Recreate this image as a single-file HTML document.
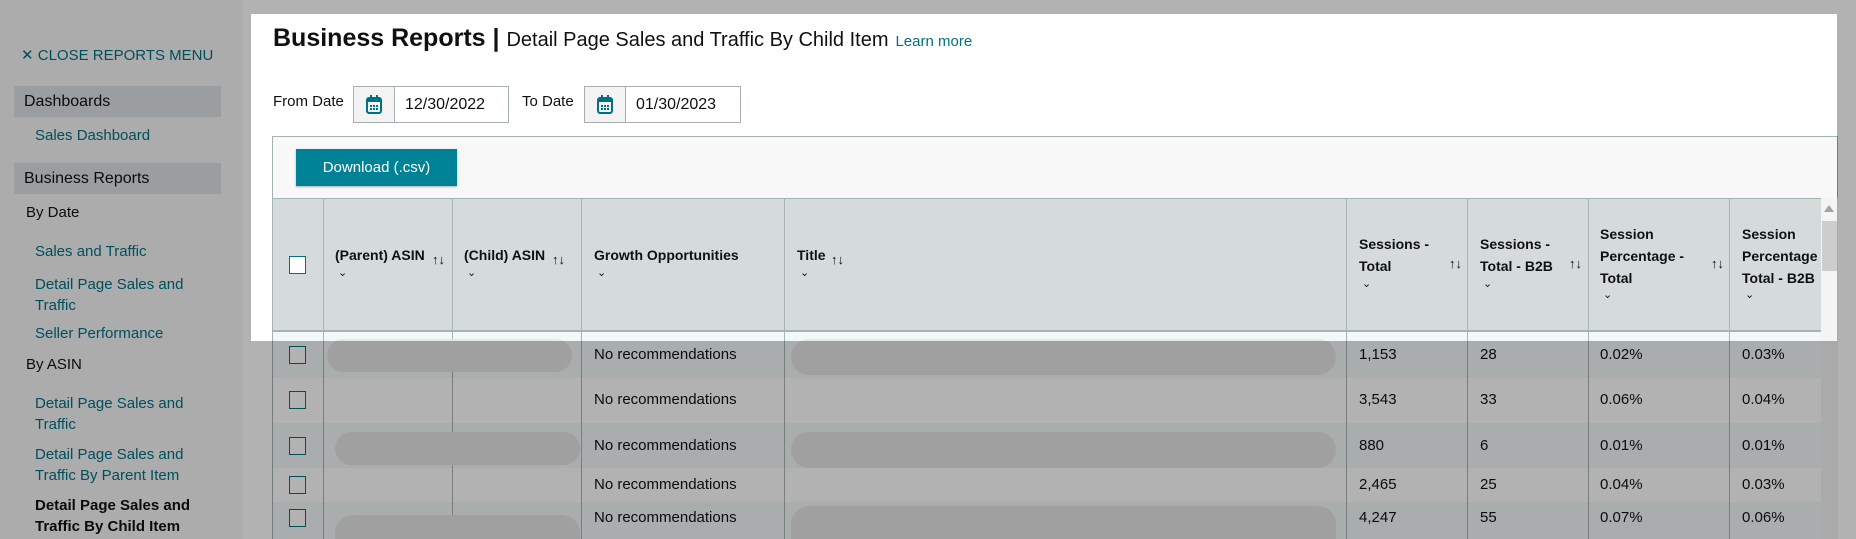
<!DOCTYPE html>
<html><head><meta charset="utf-8"><style>
*{box-sizing:border-box;margin:0;padding:0}
html{width:1856px;height:539px;overflow:hidden}
body{width:1856px;height:539px;overflow:hidden;background:#fff;font-family:"Liberation Sans",sans-serif;color:#0f1111;position:relative}
.a{position:absolute;white-space:nowrap}
.side{left:0;top:0;width:243px;height:539px;background:#f7f7f7}
.lk{color:#007185;font-size:15px}
.sec{background:#dfe3e5;font-size:16px;color:#0f1111;padding-left:10px;line-height:31px;width:207px;left:14px}
.hd{font-size:14px;font-weight:bold;color:#0f1111;line-height:22px}
.car{font-size:11px;color:#0f1111}
.sort{font-size:13px;font-weight:bold}
.cb{width:17px;height:18px;border:1.5px solid #007185;background:#fff}
.td{font-size:15px;color:#0f1111}
.pill{background:#e6e6e6;border-radius:18px}
.ov{position:absolute;background:rgba(0,0,0,0.3)}
.vl{position:absolute;width:1px;background:#a9b5b5}
</style></head><body>
<div class="a side"></div>
<div class="a lk" style="left:21px;top:46px">✕ CLOSE REPORTS MENU</div>
<div class="a sec" style="top:86px">Dashboards</div>
<div class="a lk" style="left:35px;top:127px">Sales Dashboard</div>
<div class="a sec" style="top:163px">Business Reports</div>
<div class="a" style="left:26px;top:204px;font-size:15px">By Date</div>
<div class="a lk" style="left:35px;top:243px">Sales and Traffic</div>
<div class="a lk" style="left:35px;top:274px;line-height:21px">Detail Page Sales and<br>Traffic</div>
<div class="a lk" style="left:35px;top:325px">Seller Performance</div>
<div class="a" style="left:26px;top:356px;font-size:15px">By ASIN</div>
<div class="a lk" style="left:35px;top:393px;line-height:21px">Detail Page Sales and<br>Traffic</div>
<div class="a lk" style="left:35px;top:444px;line-height:21px">Detail Page Sales and<br>Traffic By Parent Item</div>
<div class="a" style="left:35px;top:495px;line-height:21px;font-size:15px;font-weight:bold">Detail Page Sales and<br>Traffic By Child Item</div>

<div class="a" style="left:273px;top:24px;font-size:25px;font-weight:bold;color:#0f1111">Business Reports <span style="font-weight:bold">|</span> <span style="font-size:20px;font-weight:normal">Detail Page Sales and Traffic By Child Item</span> <span style="font-size:15px;font-weight:normal;color:#007185">Learn more</span></div>

<div class="a" style="left:273px;top:93px;font-size:15px">From Date</div>
<div class="a" style="left:353px;top:86px;width:156px;height:37px;border:1px solid #a6b0b0;background:#fff"></div>
<div class="a" style="left:353px;top:86px;width:42px;height:37px;border:1px solid #a6b0b0;background:#f3f3f3"></div>
<svg class="a" style="left:366px;top:95px" width="16" height="19" viewBox="0 0 16 19"><rect x="1" y="3" width="14" height="15" rx="2" fill="none" stroke="#007185" stroke-width="2"/><rect x="1" y="3" width="14" height="4" fill="#007185"/><rect x="4" y="0" width="2" height="4" fill="#007185"/><rect x="10" y="0" width="2" height="4" fill="#007185"/><g fill="#007185"><rect x="4" y="10" width="2" height="2"/><rect x="7" y="10" width="2" height="2"/><rect x="10" y="10" width="2" height="2"/><rect x="4" y="13" width="2" height="2"/><rect x="7" y="13" width="2" height="2"/><rect x="10" y="13" width="2" height="2"/></g></svg>
<div class="a" style="left:405px;top:96px;font-size:16px">12/30/2022</div>
<div class="a" style="left:522px;top:93px;font-size:15px">To Date</div>
<div class="a" style="left:584px;top:86px;width:157px;height:37px;border:1px solid #a6b0b0;background:#fff"></div>
<div class="a" style="left:584px;top:86px;width:42px;height:37px;border:1px solid #a6b0b0;background:#f3f3f3"></div>
<svg class="a" style="left:597px;top:95px" width="16" height="19" viewBox="0 0 16 19"><rect x="1" y="3" width="14" height="15" rx="2" fill="none" stroke="#007185" stroke-width="2"/><rect x="1" y="3" width="14" height="4" fill="#007185"/><rect x="4" y="0" width="2" height="4" fill="#007185"/><rect x="10" y="0" width="2" height="4" fill="#007185"/><g fill="#007185"><rect x="4" y="10" width="2" height="2"/><rect x="7" y="10" width="2" height="2"/><rect x="10" y="10" width="2" height="2"/><rect x="4" y="13" width="2" height="2"/><rect x="7" y="13" width="2" height="2"/><rect x="10" y="13" width="2" height="2"/></g></svg>
<div class="a" style="left:636px;top:96px;font-size:16px">01/30/2023</div>

<!-- table container -->
<div class="a" style="left:272px;top:136px;width:1566px;height:403px;border:1px solid #a6b3b3;border-bottom:none;background:#f8f8f8"></div>
<div class="a" style="left:296px;top:149px;width:161px;height:37px;background:#008296;color:#fff;font-size:15px;line-height:37px;text-align:center;box-shadow:0 1px 2px rgba(0,0,0,.3)">Download (.csv)</div>
<div class="a" style="left:273px;top:198px;width:1548px;height:134px;background:#d5dbdb;border-top:1px solid #a6b3b3;border-bottom:2px solid #a6b3b3"></div>
<div class="a" style="left:273px;top:332px;width:1548px;height:46px;background:#f2f8f8"></div>
<div class="a" style="left:273px;top:378px;width:1548px;height:45px;background:#fff"></div>
<div class="a" style="left:273px;top:423px;width:1548px;height:45px;background:#f2f8f8"></div>
<div class="a" style="left:273px;top:468px;width:1548px;height:34px;background:#fff"></div>
<div class="a" style="left:273px;top:502px;width:1548px;height:37px;background:#f2f8f8"></div>
<div class="vl" style="left:323px;top:198px;height:341px"></div>
<div class="vl" style="left:452px;top:198px;height:341px"></div>
<div class="vl" style="left:581px;top:198px;height:341px"></div>
<div class="vl" style="left:784px;top:198px;height:341px"></div>
<div class="vl" style="left:1346px;top:198px;height:341px"></div>
<div class="vl" style="left:1467px;top:198px;height:341px"></div>
<div class="vl" style="left:1588px;top:198px;height:341px"></div>
<div class="vl" style="left:1729px;top:198px;height:341px"></div>
<div class="a" style="left:1821px;top:198px;width:17px;height:341px;background:#f4f4f4"></div>
<div class="a" style="left:1822px;top:221px;width:15px;height:50px;background:#cdcdcd"></div>
<div class="a" style="left:1824px;top:205px;width:0;height:0;border-left:5px solid transparent;border-right:5px solid transparent;border-bottom:7px solid #a3a3a3"></div>

<div class="a cb" style="left:289px;top:256px"></div>
<div class="a hd" style="left:335px;top:244px">(Parent) ASIN</div><div class="a sort" style="left:432px;top:252px">↑↓</div><div class="a car" style="left:338px;top:266px">⌄</div>
<div class="a hd" style="left:464px;top:244px">(Child) ASIN</div><div class="a sort" style="left:552px;top:252px">↑↓</div><div class="a car" style="left:467px;top:266px">⌄</div>
<div class="a hd" style="left:594px;top:244px">Growth Opportunities</div><div class="a car" style="left:597px;top:266px">⌄</div>
<div class="a hd" style="left:797px;top:244px">Title</div><div class="a sort" style="left:831px;top:252px">↑↓</div><div class="a car" style="left:800px;top:266px">⌄</div>
<div class="a hd" style="left:1359px;top:233px">Sessions -<br>Total</div><div class="a sort" style="left:1449px;top:256px">↑↓</div><div class="a car" style="left:1362px;top:277px">⌄</div>
<div class="a hd" style="left:1480px;top:233px">Sessions -<br>Total - B2B</div><div class="a sort" style="left:1569px;top:256px">↑↓</div><div class="a car" style="left:1483px;top:277px">⌄</div>
<div class="a hd" style="left:1600px;top:223px">Session<br>Percentage -<br>Total</div><div class="a sort" style="left:1711px;top:256px">↑↓</div><div class="a car" style="left:1603px;top:288px">⌄</div>
<div class="a hd" style="left:1742px;top:223px;width:78px;overflow:hidden">Session<br>Percentage -<br>Total - B2B</div><div class="a car" style="left:1745px;top:288px">⌄</div>

<!-- rows -->
<div class="a cb" style="left:289px;top:346px"></div>
<div class="a cb" style="left:289px;top:391px"></div>
<div class="a cb" style="left:289px;top:437px"></div>
<div class="a cb" style="left:289px;top:476px"></div>
<div class="a cb" style="left:289px;top:509px"></div>
<div class="a pill" style="left:327px;top:339px;width:245px;height:33px"></div>
<div class="a pill" style="left:791px;top:339px;width:545px;height:36px"></div>
<div class="a pill" style="left:335px;top:432px;width:245px;height:33px"></div>
<div class="a pill" style="left:791px;top:432px;width:545px;height:36px"></div>
<div class="a pill" style="left:335px;top:515px;width:245px;height:24px;border-radius:18px 18px 0 0"></div>
<div class="a pill" style="left:791px;top:506px;width:545px;height:33px;border-radius:18px 18px 0 0"></div>
<div class="a td" style="left:594px;top:346px">No recommendations</div>
<div class="a td" style="left:594px;top:391px">No recommendations</div>
<div class="a td" style="left:594px;top:437px">No recommendations</div>
<div class="a td" style="left:594px;top:476px">No recommendations</div>
<div class="a td" style="left:594px;top:509px">No recommendations</div>
<div class="a td" style="left:1359px;top:346px">1,153</div><div class="a td" style="left:1480px;top:346px">28</div><div class="a td" style="left:1600px;top:346px">0.02%</div><div class="a td" style="left:1742px;top:346px">0.03%</div>
<div class="a td" style="left:1359px;top:391px">3,543</div><div class="a td" style="left:1480px;top:391px">33</div><div class="a td" style="left:1600px;top:391px">0.06%</div><div class="a td" style="left:1742px;top:391px">0.04%</div>
<div class="a td" style="left:1359px;top:437px">880</div><div class="a td" style="left:1480px;top:437px">6</div><div class="a td" style="left:1600px;top:437px">0.01%</div><div class="a td" style="left:1742px;top:437px">0.01%</div>
<div class="a td" style="left:1359px;top:476px">2,465</div><div class="a td" style="left:1480px;top:476px">25</div><div class="a td" style="left:1600px;top:476px">0.04%</div><div class="a td" style="left:1742px;top:476px">0.03%</div>
<div class="a td" style="left:1359px;top:509px">4,247</div><div class="a td" style="left:1480px;top:509px">55</div><div class="a td" style="left:1600px;top:509px">0.07%</div><div class="a td" style="left:1742px;top:509px">0.06%</div>

<!-- overlay outside highlighted panel -->
<div class="ov" style="left:0;top:0;width:1856px;height:14px"></div>
<div class="ov" style="left:0;top:14px;width:251px;height:327px"></div>
<div class="ov" style="left:1837px;top:14px;width:19px;height:327px"></div>
<div class="ov" style="left:0;top:341px;width:1856px;height:198px"></div>
</body></html>
